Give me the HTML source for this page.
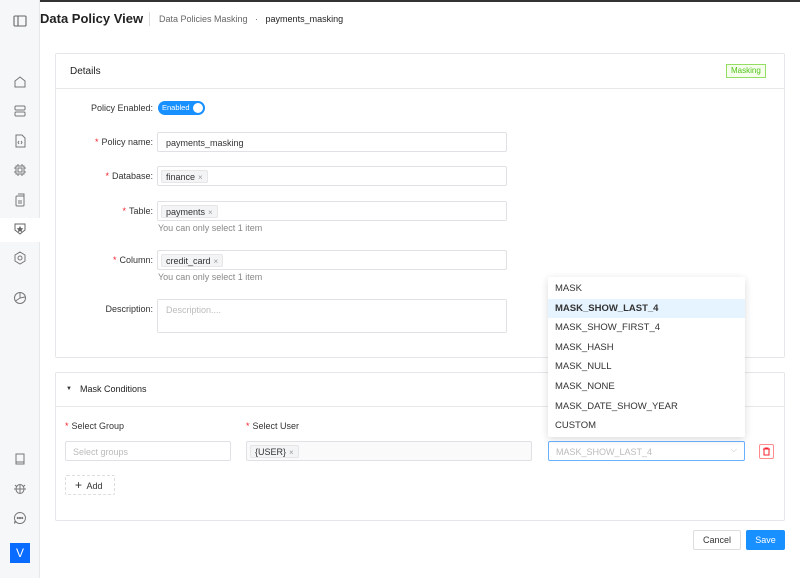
<!DOCTYPE html>
<html><head><meta charset="utf-8"><style>
*{box-sizing:border-box;margin:0;padding:0}
body{width:800px;height:578px;overflow:hidden;font-family:"Liberation Sans",sans-serif;font-size:9px;color:#333;background:#fff;position:relative}
.a{position:absolute}
.side{left:0;top:0;width:40px;height:578px;background:#f6f7f9;border-right:1px solid #e6e8eb}
.ic{position:absolute;left:13px;width:14px;height:14px}
.card{border:1px solid #e4e6ea;border-radius:2px;background:#fff}
.inp{border:1px solid #dfe1e5;border-radius:2px;background:#fff;height:20px}
.lbl{text-align:right;width:100px;font-size:9px;color:#333}
.req{color:#f5222d;margin-right:3px}
.tag{position:absolute;top:3px;left:3px;height:13px;background:#f3f4f6;border:1px solid #e6e6e6;border-radius:2px;padding:0 4px;line-height:12px;font-size:9px}
.tag i{font-style:normal;color:#999;margin-left:3px;font-size:8px}
.hint{color:#888;font-size:9px}
.dd div{height:19.6px;line-height:20px;padding-left:7px;font-size:9.5px;color:#333}
</style></head><body>
<div class="a" style="left:0;top:0;width:800px;height:2px;background:#333"></div>
<div class="a side">
<svg class="ic" style="top:14px" viewBox="0 0 14 14" fill="none" stroke="#666" stroke-width="1.1"><rect x="1" y="2" width="12" height="10" rx="1"/><line x1="5" y1="2" x2="5" y2="12"/></svg>
<svg class="ic" style="top:75px" viewBox="0 0 14 14" fill="none" stroke="#777" stroke-width="1"><path d="M2 6L7 2l5 4v6H2z"/></svg>
<svg class="ic" style="top:104px" viewBox="0 0 14 14" fill="none" stroke="#777" stroke-width="1"><rect x="2" y="2" width="10" height="4" rx="1"/><rect x="2" y="8" width="10" height="4" rx="1"/></svg>
<svg class="ic" style="top:134px" viewBox="0 0 14 14" fill="none" stroke="#777" stroke-width="1"><path d="M3 1h6l3 3v9H3z"/><path d="M6 7l-1 1.5 1 1.5M8 7l1 1.5-1 1.5"/></svg>
<svg class="ic" style="top:163px" viewBox="0 0 14 14" fill="none" stroke="#777" stroke-width="1"><rect x="3" y="3" width="8" height="8"/><rect x="5" y="5" width="4" height="4"/><path d="M1 5h2M1 9h2M11 5h2M11 9h2M5 1v2M9 1v2M5 11v2M9 11v2"/></svg>
<svg class="ic" style="top:193px" viewBox="0 0 14 14" fill="none" stroke="#777" stroke-width="1"><rect x="3" y="3" width="8" height="10" rx="1"/><path d="M5 1h6v9M5 8h4M5 10h4"/></svg>
<div class="a" style="left:0;top:218px;width:40px;height:24px;background:#fff"></div>
<svg class="ic" style="top:222px" viewBox="0 0 14 14" fill="none" stroke="#666" stroke-width="1"><path d="M2 2h10v6l-5 4-5-4z"/><path d="M7 5l.7 1.5 1.5.2-1.1 1 .3 1.5L7 8.5l-1.4.7.3-1.5-1.1-1 1.5-.2z" fill="#666"/></svg>
<svg class="ic" style="top:251px" viewBox="0 0 14 14" fill="none" stroke="#777" stroke-width="1"><path d="M7 1l5 3v6l-5 3-5-3V4z"/><circle cx="7" cy="7" r="2"/></svg>
<svg class="ic" style="top:291px" viewBox="0 0 14 14" fill="none" stroke="#777" stroke-width="1"><circle cx="7" cy="7" r="5.5"/><path d="M7 1.5V7l-4.5 3M7 7l5-1"/></svg>
<svg class="ic" style="top:452px" viewBox="0 0 14 14" fill="none" stroke="#777" stroke-width="1"><path d="M3 2h8v10H3zM3 10h8"/></svg>
<svg class="ic" style="top:481px" viewBox="0 0 14 14" fill="none" stroke="#777" stroke-width="1"><ellipse cx="7" cy="8" rx="4" ry="4.5"/><path d="M1 8h12M7 4v8M2 4l2 2M12 4l-2 2"/></svg>
<svg class="ic" style="top:511px" viewBox="0 0 14 14" fill="none" stroke="#777" stroke-width="1"><path d="M7 1.5a5.5 5.5 0 1 1-4.3 9L1.5 12.5l.6-3A5.5 5.5 0 0 1 7 1.5z"/><circle cx="4.8" cy="7" r=".6" fill="#777"/><circle cx="7" cy="7" r=".6" fill="#777"/><circle cx="9.2" cy="7" r=".6" fill="#777"/></svg>
<div class="a" style="left:10px;top:543px;width:20px;height:20px;background:#0a6cff;color:#fff;font-size:12px;text-align:center;line-height:20px">V</div>
</div>
<div class="a" style="left:40px;top:11px;font-size:13px;font-weight:bold;color:#222">Data Policy View</div>
<div class="a" style="left:149px;top:12px;width:1px;height:14px;background:#ddd"></div>
<div class="a" style="left:159px;top:14px;font-size:9px;color:#666">Data Policies Masking&nbsp;&nbsp;&nbsp;·&nbsp;&nbsp;&nbsp;<span style="color:#222">payments_masking</span></div>

<div class="a card" style="left:55px;top:53px;width:730px;height:305px"></div>
<div class="a" style="left:55px;top:88px;width:730px;height:1px;background:#e8e8e8"></div>
<div class="a" style="left:70px;top:66px;font-size:10px;color:#222">Details</div>
<div class="a" style="left:726px;top:64px;height:14px;border:1px solid #95de64;background:#f6ffed;color:#52c41a;font-size:8px;line-height:12px;padding:0 4px">Masking</div>

<div class="a lbl" style="left:53px;top:103px">Policy Enabled:</div>
<div class="a" style="left:158px;top:101px;width:47px;height:14px;border-radius:7px;background:#1890ff"><span class="a" style="left:4px;top:3px;color:#fff;font-size:7.5px;line-height:8px">Enabled</span><div class="a" style="right:2px;top:2px;width:10px;height:10px;border-radius:5px;background:#fff"></div></div>

<div class="a lbl" style="left:53px;top:137px"><span class="req">*</span>Policy name:</div>
<div class="a inp" style="left:157px;top:132px;width:350px"><span class="a" style="left:8px;top:5px;font-size:9px">payments_masking</span></div>
<div class="a lbl" style="left:53px;top:171px"><span class="req">*</span>Database:</div>
<div class="a inp" style="left:157px;top:166px;width:350px"><span class="tag">finance<i>×</i></span></div>
<div class="a lbl" style="left:53px;top:206px"><span class="req">*</span>Table:</div>
<div class="a inp" style="left:157px;top:201px;width:350px"><span class="tag">payments<i>×</i></span></div>
<div class="a hint" style="left:158px;top:223px">You can only select 1 item</div>
<div class="a lbl" style="left:53px;top:255px"><span class="req">*</span>Column:</div>
<div class="a inp" style="left:157px;top:250px;width:350px"><span class="tag">credit_card<i>×</i></span></div>
<div class="a hint" style="left:158px;top:272px">You can only select 1 item</div>
<div class="a lbl" style="left:53px;top:304px">Description:</div>
<div class="a inp" style="left:157px;top:299px;width:350px;height:34px"><span class="a" style="left:8px;top:5px;color:#bbb">Description....</span></div>

<div class="a card" style="left:55px;top:372px;width:730px;height:149px"></div>
<div class="a" style="left:55px;top:406px;width:730px;height:1px;background:#e8e8e8"></div>
<div class="a" style="left:66px;top:386px;font-size:6px">▼</div>
<div class="a" style="left:80px;top:384px;font-size:9px;color:#222">Mask Conditions</div>
<div class="a" style="left:65px;top:421px"><span class="req">*</span>Select Group</div>
<div class="a" style="left:246px;top:421px"><span class="req">*</span>Select User</div>
<div class="a inp" style="left:65px;top:441px;width:166px"><span class="a" style="left:7px;top:5px;color:#bbb">Select groups</span></div>
<div class="a inp" style="left:246px;top:441px;width:286px;background:#fafafa"><span class="tag">{USER}<i>×</i></span></div>
<div class="a inp" style="left:548px;top:441px;width:197px;border-color:#69b1ff"><span class="a" style="left:7px;top:5px;color:#bbb">MASK_SHOW_LAST_4</span><span class="a" style="right:7px;top:3px;color:#bbb;font-size:8px">⌵</span></div>
<div class="a" style="left:759px;top:444px;width:15px;height:15px;border:1px solid #ff8c8c;border-radius:2px"><svg width="13" height="13" viewBox="0 0 13 13" fill="none" stroke="#f5222d" stroke-width="1"><path d="M3 4h7M5 4V3h3v1M4 4v6h5V4"/></svg></div>
<div class="a" style="left:65px;top:475px;width:50px;height:20px;border:1px dashed #ddd;border-radius:2px;font-size:9px;line-height:18px;padding-left:9px"><b style="font-size:12px;font-weight:normal">+</b>&nbsp; Add</div>

<div class="a dd" style="left:548px;top:277px;width:197px;height:160px;background:#fff;box-shadow:0 2px 8px rgba(0,0,0,.15);border-radius:2px;padding-top:2px">
<div>MASK</div><div style="background:#e6f4ff;font-weight:bold">MASK_SHOW_LAST_4</div><div>MASK_SHOW_FIRST_4</div><div>MASK_HASH</div><div>MASK_NULL</div><div>MASK_NONE</div><div>MASK_DATE_SHOW_YEAR</div><div>CUSTOM</div>
</div>

<div class="a" style="left:693px;top:530px;width:48px;height:20px;border:1px solid #ddd;border-radius:2px;text-align:center;line-height:18px;font-size:9px">Cancel</div>
<div class="a" style="left:746px;top:530px;width:39px;height:20px;background:#1890ff;border-radius:2px;color:#fff;text-align:center;line-height:20px;font-size:9px">Save</div>
</body></html>
